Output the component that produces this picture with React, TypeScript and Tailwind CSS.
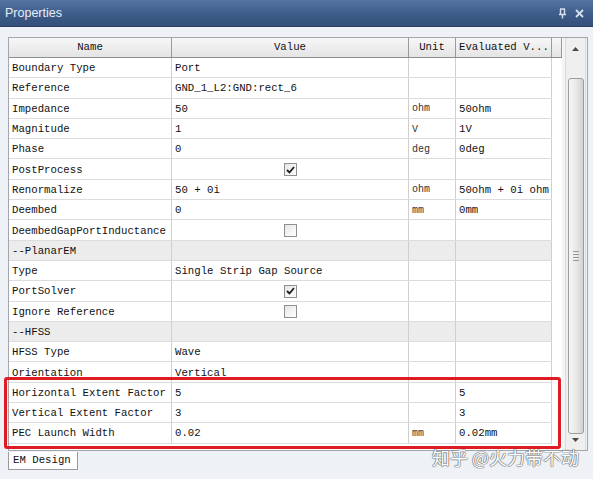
import React from "react"

type Row = { name: string; value?: string; unit?: string; evald?: string; kind?: "check" | "uncheck" | "section" }

const rows: Row[] = [
  { name: "Boundary Type", value: "Port" },
  { name: "Reference", value: "GND_1_L2:GND:rect_6" },
  { name: "Impedance", value: "50", unit: "ohm", evald: "50ohm" },
  { name: "Magnitude", value: "1", unit: "V", evald: "1V" },
  { name: "Phase", value: "0", unit: "deg", evald: "0deg" },
  { name: "PostProcess", kind: "check" },
  { name: "Renormalize", value: "50 + 0i", unit: "ohm", evald: "50ohm + 0i ohm" },
  { name: "Deembed", value: "0", unit: "mm", evald: "0mm" },
  { name: "DeembedGapPortInductance", kind: "uncheck" },
  { name: "--PlanarEM", kind: "section" },
  { name: "Type", value: "Single Strip Gap Source" },
  { name: "PortSolver", kind: "check" },
  { name: "Ignore Reference", kind: "uncheck" },
  { name: "--HFSS", kind: "section" },
  { name: "HFSS Type", value: "Wave" },
  { name: "Orientation", value: "Vertical" },
  { name: "Horizontal Extent Factor", value: "5", evald: "5" },
  { name: "Vertical Extent Factor", value: "3", evald: "3" },
  { name: "PEC Launch Width", value: "0.02", unit: "mm", evald: "0.02mm" },
]

const CheckBox = ({ checked }: { checked: boolean }) => (
  <div className="w-[13px] h-[13px] border border-[#8e8f8f] bg-gradient-to-br from-[#e6e6e6] to-white flex items-center justify-center">
    {checked && (
      <svg width="9" height="8" viewBox="0 0 9 8">
        <path d="M1 4 L3.5 6.5 L8 1" stroke="#1b1b1b" strokeWidth="1.8" fill="none" />
      </svg>
    )}
  </div>
)

const Cell = ({ children, className = "" }: { children?: React.ReactNode; className?: string }) => (
  <div className={`h-full border-r border-[#cfcfcf] flex items-center px-[3px] pt-[1px] overflow-hidden whitespace-nowrap ${className}`}>{children}</div>
)

export default function App() {
  return (
    <div className="relative w-[593px] h-[479px] bg-[#eef1f5] overflow-hidden font-['Liberation_Mono',monospace] text-[10.7px] text-[#111]">
      {/* title bar */}
      <div className="h-[27px] bg-gradient-to-b from-[#5574a0] via-[#3f5e8b] to-[#334f7a] flex items-center justify-between pl-[5px] pr-[9px] border-b border-[#2a3f60]">
        <span className="font-['Liberation_Sans',sans-serif] text-[12.5px] text-[#e8eef8]">Properties</span>
        <div className="flex items-center gap-[8px]">
          <svg width="9" height="11" viewBox="0 0 9 11">
            <path d="M2 1 H7 M2.5 1 V6 M6.5 1 V6 M1 6.5 H8 M4.5 6.5 V10.5" stroke="#d7e0ee" strokeWidth="1.4" fill="none" />
          </svg>
          <svg width="9" height="9" viewBox="0 0 9 9">
            <path d="M1 1 L8 8 M8 1 L1 8" stroke="#d7e0ee" strokeWidth="1.8" />
          </svg>
        </div>
      </div>

      {/* panel */}
      <div className="ml-[8px] mr-[5px] mt-[10px] h-[414px] border border-[#a3a6ab] bg-[#f3f4f6] flex">
        <div className="w-[553px] bg-white flex flex-col">
          {/* header */}
          <div className="h-[20px] flex border-b border-[#8f8f8f] bg-gradient-to-b from-[#f7f7f7] to-[#e4e4e4] shrink-0">
            <div className="w-[163px] border-r border-[#9a9a9a] flex items-center justify-center">Name</div>
            <div className="w-[237px] border-r border-[#9a9a9a] flex items-center justify-center">Value</div>
            <div className="w-[47px] border-r border-[#9a9a9a] flex items-center justify-center">Unit</div>
            <div className="w-[96px] border-r border-[#9a9a9a] flex items-center px-[3px] whitespace-nowrap">Evaluated V...</div>
            <div className="w-[10px] border-r border-[#9a9a9a]" />
          </div>
          {rows.map((r) => (
            <div
              key={r.name}
              className={`h-[20.3px] shrink-0 w-[543px] grid grid-cols-[163px_237px_47px_96px] border-b border-[#dcdcdc] ${r.kind === "section" ? "bg-[#ececec]" : ""}`}
            >
              <Cell>{r.name}</Cell>
              <Cell className={r.kind === "check" || r.kind === "uncheck" ? "justify-center" : ""}>
                {r.kind === "check" && <CheckBox checked />}
                {r.kind === "uncheck" && <CheckBox checked={false} />}
                {r.value}
              </Cell>
              <Cell className="text-[10px] text-[#333]">{r.unit}</Cell>
              <Cell>{r.evald}</Cell>
            </div>
          ))}
        </div>

        {/* scrollbar */}
        <div className="w-[21px] ml-[3px] border-x border-[#dadada] bg-[#efefef] flex flex-col items-center">
          <div className="h-[20px] flex items-center justify-center mt-[1px]">
            <svg width="7" height="4" viewBox="0 0 7 4"><path d="M0 4 L3.5 0 L7 4 Z" fill="#4a4a4a" /></svg>
          </div>
          <div className="mt-[19px] w-[16px] h-[356px] rounded-[3px] border border-[#9d9d9d] bg-gradient-to-r from-[#f6f6f6] via-[#e9e9e9] to-[#d2d2d2] flex flex-col items-center justify-center gap-[2px]">
            <div className="w-[6px] h-px bg-[#9a9a9a]" />
            <div className="w-[6px] h-px bg-[#9a9a9a]" />
            <div className="w-[6px] h-px bg-[#9a9a9a]" />
            <div className="w-[6px] h-px bg-[#9a9a9a]" />
          </div>
          <div className="h-[12px] flex items-center justify-center">
            <svg width="7" height="4" viewBox="0 0 7 4"><path d="M0 0 L3.5 4 L7 0 Z" fill="#4a4a4a" /></svg>
          </div>
        </div>
      </div>

      {/* tab */}
      <div className="ml-[8px] mt-[1px] w-[70px] h-[18px] bg-white border border-[#9a9a9a] border-t-0 flex items-center pl-[4px]">
        EM Design
      </div>

      {/* red annotation box */}
      <div className="absolute left-[4px] top-[377px] w-[557px] h-[72px] border-[3px] border-[#de1c24] rounded-[3px]" />

      {/* watermark */}
      <div className="absolute left-[432px] top-[444px] font-['Noto_Sans_CJK_SC',sans-serif] text-[18px] text-white [text-shadow:0_0_1px_#555,0_0_1px_#555,0_0_1px_#555]">
        知乎 @火力带不动
      </div>
    </div>
  )
}
